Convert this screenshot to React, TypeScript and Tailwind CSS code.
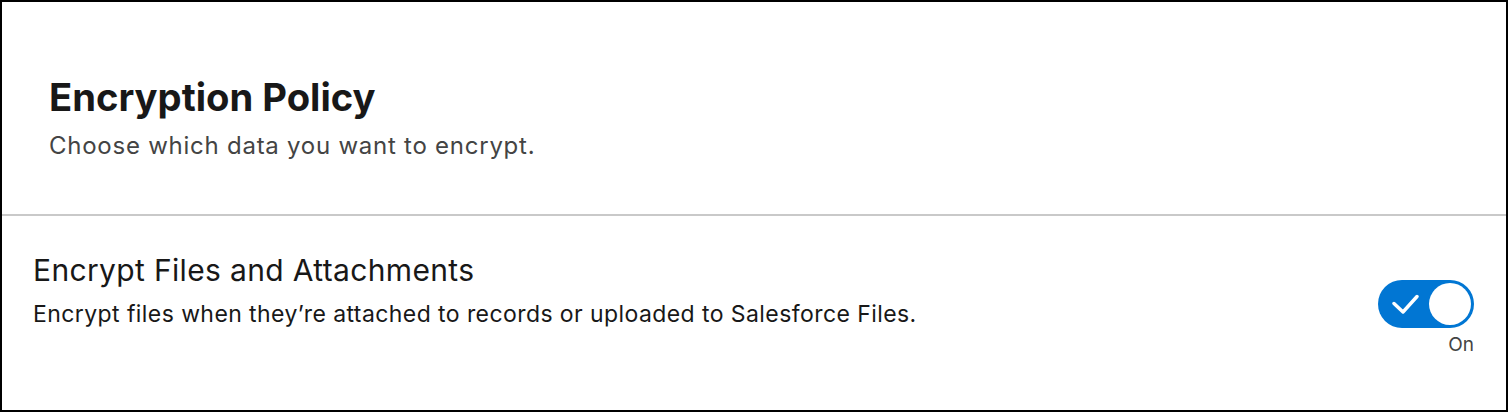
const font = { fontFamily: "Inter, 'Noto Sans', sans-serif" };

const CheckMark = () => (
  <svg width="28" height="22" viewBox="0 0 28 22" fill="none" className="ml-[13px]">
    <path
      d="M3 10.5l9 8.5L26 3.5"
      stroke="white"
      strokeWidth="3.4"
      strokeLinecap="round"
      strokeLinejoin="round"
    />
  </svg>
);

const Toggle = ({ on }: { on: boolean }) => (
  <div className="flex flex-col items-end">
    <div className="flex h-[48px] w-[96px] items-center rounded-full bg-[#0176d3] pr-[3px]">
      <CheckMark />
      <div className="ml-auto h-[42px] w-[42px] rounded-full bg-white" />
    </div>
    <span className="mt-[6px] text-[19px] leading-[22px] text-[#444444]">{on ? "On" : "Off"}</span>
  </div>
);

export default function App() {
  return (
    <div style={font} className="flex h-[412px] w-[1508px] flex-col border-2 border-black bg-white">
      <div className="h-[212px] pl-[47px] pt-[72px]">
        <h1 className="text-[38.2px] leading-[46px] font-bold text-[#181818]">Encryption Policy</h1>
        <p className="mt-[12px] text-[24px] leading-[28px] tracking-[0.75px] text-[#444444]">
          Choose which data you want to encrypt.
        </p>
      </div>
      <div className="h-[2px] bg-[#c9c9c9]" />
      <div className="flex items-start justify-between pl-[31px] pr-[32px] pt-[36px]">
        <div>
          <h2 className="text-[30px] leading-[36px] tracking-[0.35px] text-[#181818]">
            Encrypt Files and Attachments
          </h2>
          <p className="mt-[12px] text-[23px] leading-[28px] tracking-[0.42px] text-[#181818]">
            Encrypt files when they’re attached to records or uploaded to Salesforce Files.
          </p>
        </div>
        <div className="mt-[28px]">
          <Toggle on />
        </div>
      </div>
    </div>
  );
}
